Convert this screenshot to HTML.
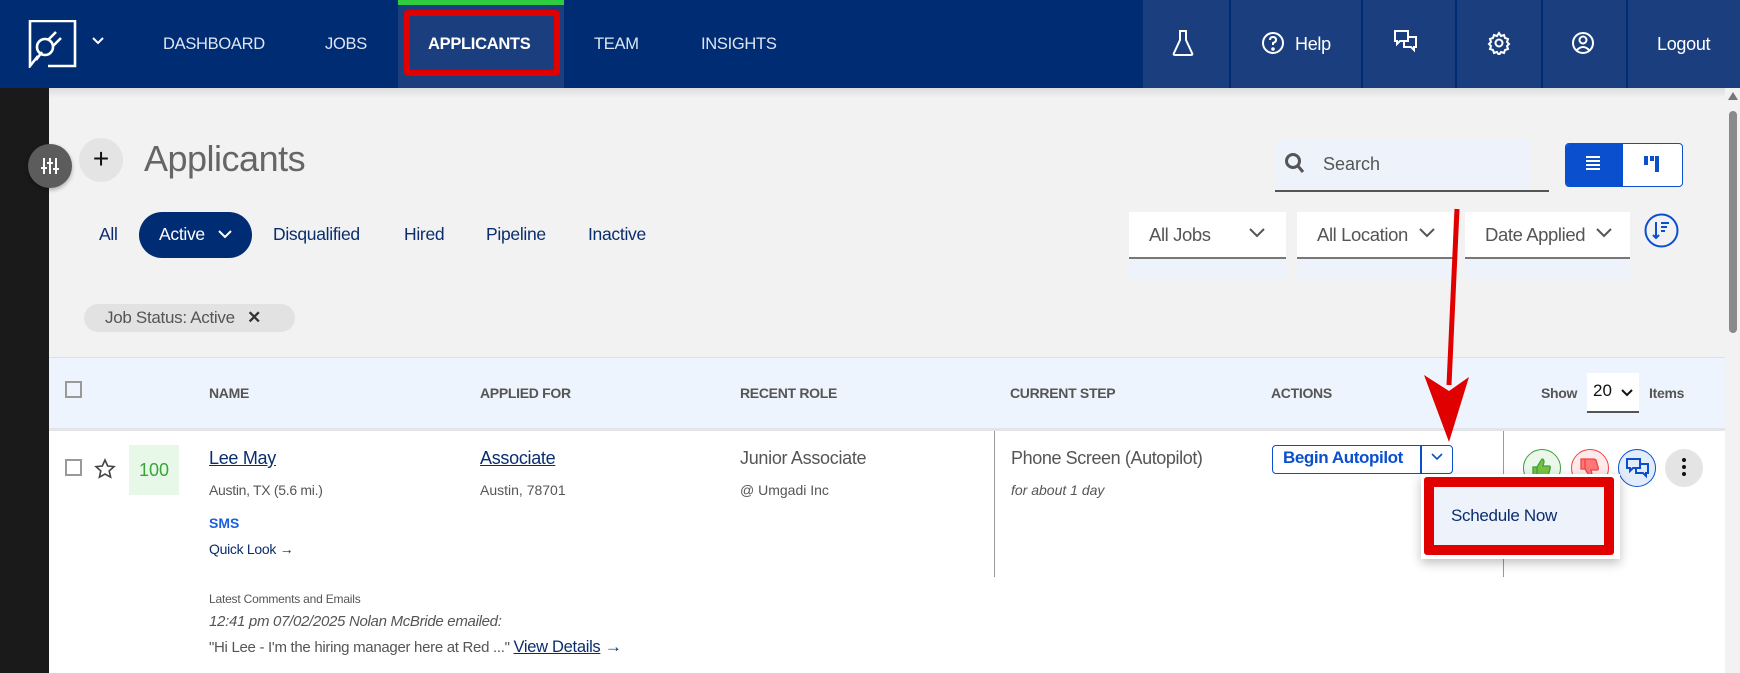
<!DOCTYPE html>
<html><head><meta charset="utf-8"><style>
*{box-sizing:border-box;margin:0;padding:0}
body{width:1740px;height:673px;overflow:hidden;background:#f2f2f2;font-family:"Liberation Sans",Arial,sans-serif;position:relative}
.a{position:absolute;white-space:nowrap}
.nav{left:0;top:0;width:1740px;height:88px;background:#002c73}
.nt{color:#dfe6f2;font-size:16.5px;top:35px;letter-spacing:-0.3px}
.rb{top:0;height:88px;background:#1b3f7e}
.hd{font-size:14px;font-weight:bold;color:#555;top:385px;letter-spacing:-0.3px}
.tab{font-size:17.5px;color:#0a2d6e;top:224px;letter-spacing:-0.3px}
.dd{background:#fff;height:47px;top:212px;border-bottom:2px solid #777;font-size:18.5px;color:#555;padding:12px 0 0 20px;letter-spacing:-0.4px}
.ddb{background:#eef3fb;height:20px;top:259px}
.circ{border-radius:50%}
</style></head><body>
<div class="a nav"></div>
<svg class="a" style="left:28px;top:20px" width="50" height="48" viewBox="0 0 50 48" fill="none" stroke="#fff" stroke-width="2.6">
<path d="M20 46H47V1H2V46L10 36"/><circle cx="17" cy="27" r="8"/><path d="M20 20l8-8M25 26l8-8M14 32l-6 8"/></svg>
<svg class="a" style="left:91px;top:36px" width="14" height="10"><path d="M2 2l5 5 5-5" stroke="#fff" stroke-width="2" fill="none"/></svg>
<div class="a nt" style="left:163px">DASHBOARD</div>
<div class="a nt" style="left:325px">JOBS</div>
<div class="a" style="left:398px;top:0;width:166px;height:88px;background:#1b3f7e"></div>
<div class="a" style="left:398px;top:0;width:166px;height:5px;background:#2ecc40"></div>
<div class="a" style="left:404px;top:10px;width:156px;height:66px;border:6px solid #e00000;border-radius:4px"></div>
<div class="a nt" style="left:428px;color:#fff;font-weight:bold">APPLICANTS</div>
<div class="a nt" style="left:594px">TEAM</div>
<div class="a nt" style="left:701px">INSIGHTS</div>
<div class="a rb" style="left:1143px;width:86px"></div>
<div class="a rb" style="left:1231px;width:130px"></div>
<div class="a rb" style="left:1363px;width:92px"></div>
<div class="a rb" style="left:1457px;width:84px"></div>
<div class="a rb" style="left:1543px;width:83px"></div>
<div class="a rb" style="left:1628px;width:112px"></div>
<svg class="a" style="left:1171px;top:29px" width="24" height="28" fill="none" stroke="#fff" stroke-width="2"><path d="M8 2h8M9 2v9L3 24q-1 2 1 2h16q2 0 1-2L15 11V2"/></svg>
<svg class="a" style="left:1261px;top:31px" width="24" height="24" fill="none" stroke="#fff" stroke-width="2"><circle cx="12" cy="12" r="10"/><path d="M9 9q0-3 3-3t3 3q0 2-3 3v2"/><circle cx="12" cy="18" r=".8" fill="#fff"/></svg>
<div class="a nt" style="left:1295px;color:#fff;font-size:18px;top:34px">Help</div>
<svg class="a" style="left:1393px;top:29px" width="26" height="26" fill="none" stroke="#fff" stroke-width="2"><path d="M2 2h13v10H7l-3 3v-3H2zM15 8h8v10h-2v3l-3-3h-7v-6"/></svg>
<svg class="a" style="left:1487px;top:31px" width="24" height="24" fill="none" stroke="#fff" stroke-width="2"><circle cx="12" cy="12" r="3.5"/><path d="M12 2l2 3 3-1 1 3 3 1-1 3 2 2-2 2 1 3-3 1-1 3-3-1-2 3-2-3-3 1-1-3-3-1 1-3-2-2 2-2-1-3 3-1 1-3 3 1z"/></svg>
<svg class="a" style="left:1571px;top:31px" width="24" height="24" fill="none" stroke="#fff" stroke-width="2"><circle cx="12" cy="12" r="10"/><circle cx="12" cy="9" r="3.5"/><path d="M6 19q6-6 12 0"/></svg>
<div class="a nt" style="left:1657px;color:#fff;font-size:18px;top:34px">Logout</div>
<div class="a" style="left:0;top:88px;width:49px;height:585px;background:#1a1a1a"></div>
<div class="a" style="left:49px;top:88px;width:1676px;height:10px;background:linear-gradient(#ddd,#f2f2f2)"></div>
<div class="a" style="left:1725px;top:88px;width:15px;height:585px;background:#f2f2f2"></div>
<div class="a" style="left:1729px;top:111px;width:8px;height:222px;background:#8a8a8a;border-radius:4px"></div>
<div class="a" style="left:1728px;top:92px;width:0;height:0;border:5px solid transparent;border-bottom:8px solid #777;border-top:0"></div>
<div class="a circ" style="left:28px;top:144px;width:44px;height:44px;background:#5c5c5c;box-shadow:0 2px 4px rgba(0,0,0,.3)"></div>
<svg class="a" style="left:40px;top:156px" width="20" height="20" stroke="#fff" stroke-width="2"><path d="M4 2v16M10 2v16M16 2v16M1 12h6M7 7h6M13 13h6"/></svg>
<div class="a circ" style="left:79px;top:138px;width:44px;height:44px;background:#e4e4e4;text-align:center;font-size:28px;line-height:42px;color:#111">+</div>
<div class="a" style="left:144px;top:138px;font-size:36px;color:#666;letter-spacing:-0.5px">Applicants</div>
<div class="a" style="left:1275px;top:139px;width:254px;height:52px;background:#eef3fb"></div>
<div class="a" style="left:1275px;top:190px;width:274px;height:2px;background:#555"></div>
<svg class="a" style="left:1284px;top:152px" width="22" height="24" fill="none" stroke="#555" stroke-width="3"><circle cx="9" cy="9" r="6.5"/><path d="M14 14l5 6"/></svg>
<div class="a" style="left:1323px;top:154px;font-size:18px;color:#555">Search</div>
<div class="a" style="left:1565px;top:143px;width:118px;height:44px;border:1.5px solid #0a4fce;border-radius:4px;background:#fff;overflow:hidden"><div style="width:57px;height:44px;background:#0a4fce"></div></div>
<svg class="a" style="left:1585px;top:155px" width="16" height="16" stroke="#fff" stroke-width="2"><path d="M1 2h14M1 6h14M1 10h14M1 14h14"/></svg>
<svg class="a" style="left:1643px;top:155px" width="18" height="18" fill="#0a4fce"><rect x="1" y="1" width="4" height="9"/><rect x="7" y="1" width="4" height="5"/><rect x="12" y="1" width="4" height="16"/></svg>
<div class="a tab" style="left:99px">All</div>
<div class="a" style="left:139px;top:212px;width:113px;height:46px;background:#002c73;border-radius:23px"></div>
<div class="a tab" style="left:159px;color:#fff">Active</div>
<svg class="a" style="left:218px;top:229px" width="14" height="10"><path d="M1 2l6 6 6-6" stroke="#fff" stroke-width="2" fill="none"/></svg>
<div class="a tab" style="left:273px">Disqualified</div>
<div class="a tab" style="left:404px">Hired</div>
<div class="a tab" style="left:486px">Pipeline</div>
<div class="a tab" style="left:588px">Inactive</div>
<div class="a dd" style="left:1129px;width:157px">All Jobs</div><div class="a ddb" style="left:1130px;width:155px"></div>
<div class="a dd" style="left:1297px;width:156px;padding-left:20px">All Location</div><div class="a ddb" style="left:1298px;width:154px"></div>
<div class="a dd" style="left:1465px;width:165px;padding-left:20px">Date Applied</div><div class="a ddb" style="left:1466px;width:163px"></div>
<svg class="a" style="left:1249px;top:228px" width="16" height="10"><path d="M1 1l7 7 7-7" stroke="#555" stroke-width="2" fill="none"/></svg>
<svg class="a" style="left:1419px;top:228px" width="16" height="10"><path d="M1 1l7 7 7-7" stroke="#555" stroke-width="2" fill="none"/></svg>
<svg class="a" style="left:1596px;top:228px" width="16" height="10"><path d="M1 1l7 7 7-7" stroke="#555" stroke-width="2" fill="none"/></svg>
<svg class="a" style="left:1644px;top:213px" width="35" height="35" fill="none" stroke="#0a4fce" stroke-width="2"><circle cx="17.5" cy="17.5" r="16"/><path d="M12 9v16M9 22l3 3 3-3M17 10h8M17 14h6M17 18h4"/></svg>
<div class="a" style="left:84px;top:304px;width:211px;height:28px;background:#e2e2e2;border-radius:14px;font-size:17px;color:#555;padding:4px 0 0 21px;letter-spacing:-0.3px">Job Status: Active <span style="color:#333;font-weight:bold;margin-left:8px">✕</span></div>
<div class="a" style="left:49px;top:357px;width:1676px;height:71px;background:#eef4fd;border-top:1px solid #e0e0e0"></div>
<div class="a" style="left:49px;top:428px;width:1676px;height:3px;background:#e2e4e8"></div>
<div class="a" style="left:65px;top:381px;width:17px;height:17px;border:2px solid #999"></div>
<div class="a hd" style="left:209px">NAME</div>
<div class="a hd" style="left:480px">APPLIED FOR</div>
<div class="a hd" style="left:740px">RECENT ROLE</div>
<div class="a hd" style="left:1010px">CURRENT STEP</div>
<div class="a hd" style="left:1271px">ACTIONS</div>
<div class="a hd" style="left:1541px">Show</div>
<div class="a" style="left:1587px;top:373px;width:52px;height:40px;background:#fff;border-bottom:2px solid #555;font-size:17px;padding:8px 0 0 6px;color:#111">20</div>
<svg class="a" style="left:1621px;top:389px" width="12" height="8"><path d="M1 1l5 5 5-5" stroke="#111" stroke-width="2" fill="none"/></svg>
<div class="a hd" style="left:1649px">Items</div>
<div class="a" style="left:49px;top:431px;width:1676px;height:242px;background:#fff"></div>
<div class="a" style="left:994px;top:431px;width:1px;height:146px;background:#999"></div>
<div class="a" style="left:1503px;top:431px;width:1px;height:146px;background:#999"></div>
<div class="a" style="left:65px;top:459px;width:17px;height:17px;border:2px solid #999"></div>
<svg class="a" style="left:94px;top:458px" width="22" height="22" fill="none" stroke="#444" stroke-width="1.6"><path d="M11 2l2.7 6 6.3.6-4.8 4.3 1.4 6.3L11 16l-5.6 3.2 1.4-6.3L2 8.6 8.3 8z"/></svg>
<div class="a" style="left:129px;top:445px;width:50px;height:50px;background:#e8f8e8;color:#3aa33a;font-size:18px;text-align:center;line-height:50px">100</div>
<div class="a" style="left:209px;top:448px;font-size:18px;color:#0a2d6e;text-decoration:underline;letter-spacing:-0.3px">Lee May</div>
<div class="a" style="left:209px;top:482px;font-size:14px;color:#555;letter-spacing:-0.3px">Austin, TX (5.6 mi.)</div>
<div class="a" style="left:209px;top:515px;font-size:14px;color:#1a5fe0;font-weight:bold">SMS</div>
<div class="a" style="left:209px;top:541px;font-size:14px;color:#0a2d6e;letter-spacing:-0.3px">Quick Look →</div>
<div class="a" style="left:480px;top:448px;font-size:18px;color:#0a2d6e;text-decoration:underline;letter-spacing:-0.3px">Associate</div>
<div class="a" style="left:480px;top:482px;font-size:14px;color:#555">Austin, 78701</div>
<div class="a" style="left:740px;top:448px;font-size:18px;color:#555;letter-spacing:-0.3px">Junior Associate</div>
<div class="a" style="left:740px;top:482px;font-size:14px;color:#555">@ Umgadi Inc</div>
<div class="a" style="left:1011px;top:448px;font-size:18px;color:#555;letter-spacing:-0.4px">Phone Screen (Autopilot)</div>
<div class="a" style="left:1011px;top:482px;font-size:14px;color:#555;font-style:italic">for about 1 day</div>
<div class="a" style="left:1272px;top:445px;width:181px;height:29px;border:1.5px solid #0a4fce;border-radius:4px"></div>
<div class="a" style="left:1420px;top:445px;width:1.5px;height:29px;background:#0a4fce"></div>
<div class="a" style="left:1283px;top:448px;font-size:17px;font-weight:bold;color:#0a4fce;letter-spacing:-0.4px">Begin Autopilot</div>
<svg class="a" style="left:1431px;top:453px" width="12" height="8"><path d="M1 1l5 5 5-5" stroke="#0a4fce" stroke-width="1.6" fill="none"/></svg>
<div class="a circ" style="left:1523px;top:449px;width:38px;height:38px;border:1.5px solid #3aa33a;background:#eaf7ea"></div>
<div class="a circ" style="left:1571px;top:449px;width:38px;height:38px;border:1.5px solid #e44;background:#fdeaea"></div>
<div class="a circ" style="left:1618px;top:449px;width:38px;height:38px;border:1.5px solid #0a4fce;background:#e3ecfb"></div>
<div class="a circ" style="left:1665px;top:449px;width:38px;height:38px;background:#e4e4e4"></div>
<svg class="a" style="left:1530px;top:456px" width="24" height="24"><path d="M3 11h4v10H3zM7 11l5-8q2 0 2 3l-1 4h6q2 0 1 3l-2 7q-1 1-3 1H7" fill="#7bc043" stroke="#3aa33a" stroke-width="1.3"/></svg>
<svg class="a" style="left:1578px;top:456px" width="24" height="24"><path d="M3 3h4v10H3zM7 13l5 8q2 0 2-3l-1-4h6q2 0 1-3l-2-7q-1-1-3-1H7" fill="#f77" stroke="#e44" stroke-width="1.3"/></svg>
<svg class="a" style="left:1625px;top:456px" width="26" height="24" fill="none" stroke="#0a4fce" stroke-width="2"><path d="M2 3h13v9H8l-3 3v-3H2zM15 8h8v9h-2v3l-3-3h-7v-5"/></svg>
<div class="a" style="left:1682px;top:458px;width:4px;height:4px;background:#111;border-radius:2px;box-shadow:0 7px 0 #111,0 14px 0 #111"></div>
<div class="a" style="left:1421px;top:474px;width:199px;height:85px;background:#fff;box-shadow:0 4px 10px rgba(0,0,0,.25)"></div>
<div class="a" style="left:1424px;top:477px;width:190px;height:78px;border:10px solid #e00000;border-radius:3px;background:#eef3fb"></div>
<div class="a" style="left:1451px;top:506px;font-size:17px;color:#0a2d6e;letter-spacing:-0.3px">Schedule Now</div>
<div class="a" style="left:209px;top:592px;font-size:12px;color:#555;letter-spacing:-0.2px">Latest Comments and Emails</div>
<div class="a" style="left:209px;top:613px;font-size:15px;color:#555;font-style:italic;letter-spacing:-0.3px">12:41 pm 07/02/2025 Nolan McBride emailed:</div>
<div class="a" style="left:209px;top:637px;font-size:15px;color:#555;letter-spacing:-0.3px">"Hi Lee - I'm the hiring manager here at Red ..." <span style="font-size:16.5px;color:#0a2d6e;text-decoration:underline">View Details</span><span style="font-size:17px;color:#0a2d6e"> →</span></div>
<svg class="a" style="left:1410px;top:200px" width="60" height="250"><path d="M47 9L39 185" stroke="#e00000" stroke-width="5" fill="none"/><path d="M14 175l25 67 20-65-20 14z" fill="#e00000"/></svg>
</body></html>
